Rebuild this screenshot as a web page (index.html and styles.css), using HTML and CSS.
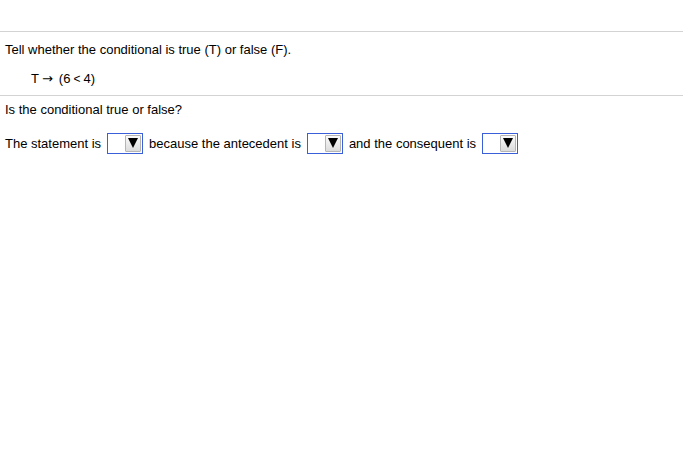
FILE: index.html
```html
<!DOCTYPE html>
<html>
<head>
<meta charset="utf-8">
<link rel="stylesheet" href="styles.css">
</head>
<body>
<div class="page">
  <div class="spacer"></div>
  <section class="question">
    <p class="prompt">Tell whether the conditional is true (T) or false (F).</p>
    <p class="expr">T<span class="arrow">&rarr;</span>(6<span class="lt">&lt;</span>4)</p>
  </section>
  <section class="answer">
    <p class="prompt">Is the conditional true or false?</p>
    <div class="row">
      <span>The statement is</span>
      <span class="select"><span class="btn"><span class="tri"></span></span></span>
      <span>because the antecedent is</span>
      <span class="select"><span class="btn"><span class="tri"></span></span></span>
      <span>and the consequent is</span>
      <span class="select"><span class="btn"><span class="tri"></span></span></span>
    </div>
  </section>
</div>
</body>
</html>
```
FILE: styles.css
```css
html, body {
  margin: 0;
  padding: 0;
  background: #fff;
}
body {
  font-family: "Liberation Sans", Arial, sans-serif;
  font-size: 13px;
  color: #000;
}
p { margin: 0; }
.spacer {
  height: 31px;
  border-bottom: 1px solid #d3d3d3;
}
.question {
  padding: 10px 5px 0;
  height: 53px;
  border-bottom: 1px solid #d3d3d3;
}
.question .prompt {
  line-height: 15px;
}
.expr {
  margin-top: 14px;
  padding-left: 26px;
  line-height: 15px;
  display: flex;
  align-items: baseline;
}
.arrow {
  font-family: "DejaVu Sans", sans-serif;
  font-size: 13px;
  margin: 0 6px 0 3px;
}
.lt {
  font-size: 12px;
  margin: 0 3px;
}
.answer {
  padding: 6px 5px 0;
}
.answer .prompt {
  line-height: 15px;
}
.row {
  margin-top: 16px;
  display: flex;
  align-items: center;
  gap: 5px;
}
.select {
  width: 32px;
  height: 17px;
  border: 1px solid #3a5fd9;
  display: flex;
  justify-content: flex-end;
  align-items: stretch;
  padding: 1px;
  margin: 0 1px;
}
.btn {
  width: 14px;
  border: 1px solid #b5b5b5;
  border-radius: 1px;
  background: linear-gradient(#fbfbfb, #dcdcdc);
  display: flex;
  align-items: flex-start;
  justify-content: center;
  padding-top: 2px;
}
.tri {
  width: 0;
  height: 0;
  border-left: 5px solid transparent;
  border-right: 5px solid transparent;
  border-top: 10px solid #000;
}
```
